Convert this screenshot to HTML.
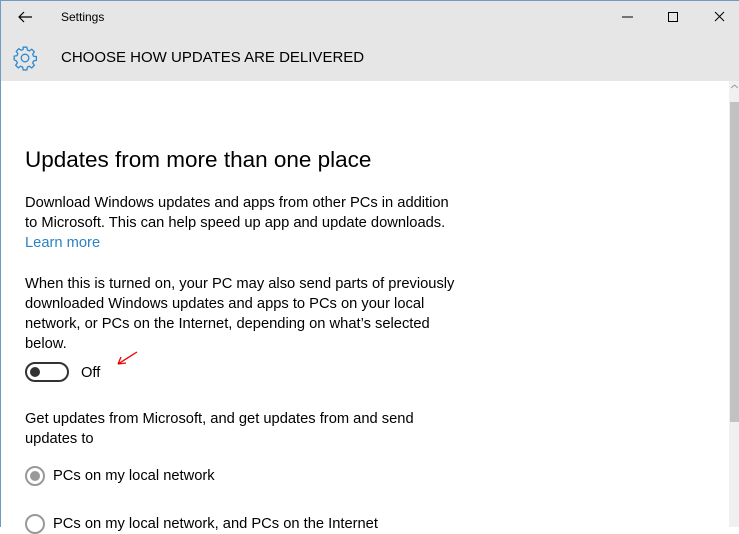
<!DOCTYPE html>
<html><head><style>
body{margin:0;width:739px;height:527px;overflow:hidden;background:#fff;font-family:"Liberation Sans",sans-serif;position:relative}
.hdr{position:absolute;left:0;top:0;width:739px;height:81px;background:#e6e6e6;border-top:1px solid #6f9bc0;box-sizing:border-box}
.lb{position:absolute;left:0;top:0;width:1px;height:527px;background:#6f9bc0}
.t{position:absolute;white-space:nowrap;color:#000}
.p{font-size:14.7px;line-height:20px;left:25px}
.sb{position:absolute;left:729px;top:81px;width:10px;height:446px;background:#f0f0f0}
.th{position:absolute;left:730px;top:102px;width:9px;height:320px;background:#c2c2c2}
</style></head><body>
<div class="hdr"></div>
<div class="lb"></div>
<svg style="position:absolute;left:17px;top:10px" width="16" height="14"><path d="M15 7H2M7 2L2 7l5 5" stroke="#000" stroke-width="1.2" fill="none"/></svg>
<div class="t" style="left:61px;top:10px;font-size:12px">Settings</div>
<svg style="position:absolute;left:620px;top:10px" width="110" height="14"><path d="M2 7h11" stroke="#000"/><rect x="48.5" y="2.5" width="9" height="9" fill="none" stroke="#000"/><path d="M95 2l9 9M104 2l-9 9" stroke="#000"/></svg>
<svg style="position:absolute;left:12px;top:45px" width="26" height="26" viewBox="0 0 24 24"><path d="M10.3 2h3.4l.5 2.6 1.8.8 2.2-1.5 2.4 2.4-1.5 2.2.8 1.8 2.6.5v3.4l-2.6.5-.8 1.8 1.5 2.2-2.4 2.4-2.2-1.5-1.8.8-.5 2.6h-3.4l-.5-2.6-1.8-.8-2.2 1.5-2.4-2.4 1.5-2.2-.8-1.8L2 13.7v-3.4l2.6-.5.8-1.8-1.5-2.2 2.4-2.4 2.2 1.5 1.8-.8z" fill="none" stroke="#2f8ad0" stroke-width="1.2"/><circle cx="12" cy="12" r="3.5" fill="none" stroke="#2f8ad0" stroke-width="1.2"/></svg>
<div class="t" style="left:61px;top:49px;font-size:15px">CHOOSE HOW UPDATES ARE DELIVERED</div>
<div class="sb"></div><div class="th"></div>
<svg style="position:absolute;left:731px;top:84px" width="7" height="5"><path d="M0 4l3.5-3 3.5 3" stroke="#999" fill="none"/></svg>
<div class="t" style="left:25px;top:147px;font-size:22.5px">Updates from more than one place</div>
<div class="t p" style="top:193px">Download Windows updates and apps from other PCs in addition<br>to Microsoft. This can help speed up app and update downloads.<br><span style="color:#2a83c6">Learn more</span></div>
<div class="t p" style="top:274px">When this is turned on, your PC may also send parts of previously<br>downloaded Windows updates and apps to PCs on your local<br>network, or PCs on the Internet, depending on what’s selected<br>below.</div>
<div style="position:absolute;left:25px;top:362px;width:44px;height:20px;border:2px solid #333;border-radius:10px;box-sizing:border-box"></div>
<div style="position:absolute;left:30px;top:367px;width:10px;height:10px;border-radius:50%;background:#333"></div>
<div class="t" style="left:81px;top:365px;font-size:14.7px">Off</div>
<svg style="position:absolute;left:114px;top:350px" width="26" height="18"><path d="M23 2L4 14M4 14l8-1M4 14l3-7" stroke="#e00" stroke-width="1.3" fill="none"/></svg>
<div class="t p" style="top:409px">Get updates from Microsoft, and get updates from and send<br>updates to</div>
<div style="position:absolute;left:25px;top:466px;width:20px;height:20px;border:2px solid #999;border-radius:50%;box-sizing:border-box"></div>
<div style="position:absolute;left:30px;top:471px;width:10px;height:10px;border-radius:50%;background:#999"></div>
<div class="t" style="left:53px;top:468px;font-size:14.7px">PCs on my local network</div>
<div style="position:absolute;left:25px;top:514px;width:20px;height:20px;border:2px solid #999;border-radius:50%;box-sizing:border-box"></div>
<div class="t" style="left:53px;top:516px;font-size:14.7px">PCs on my local network, and PCs on the Internet</div>
</body></html>
